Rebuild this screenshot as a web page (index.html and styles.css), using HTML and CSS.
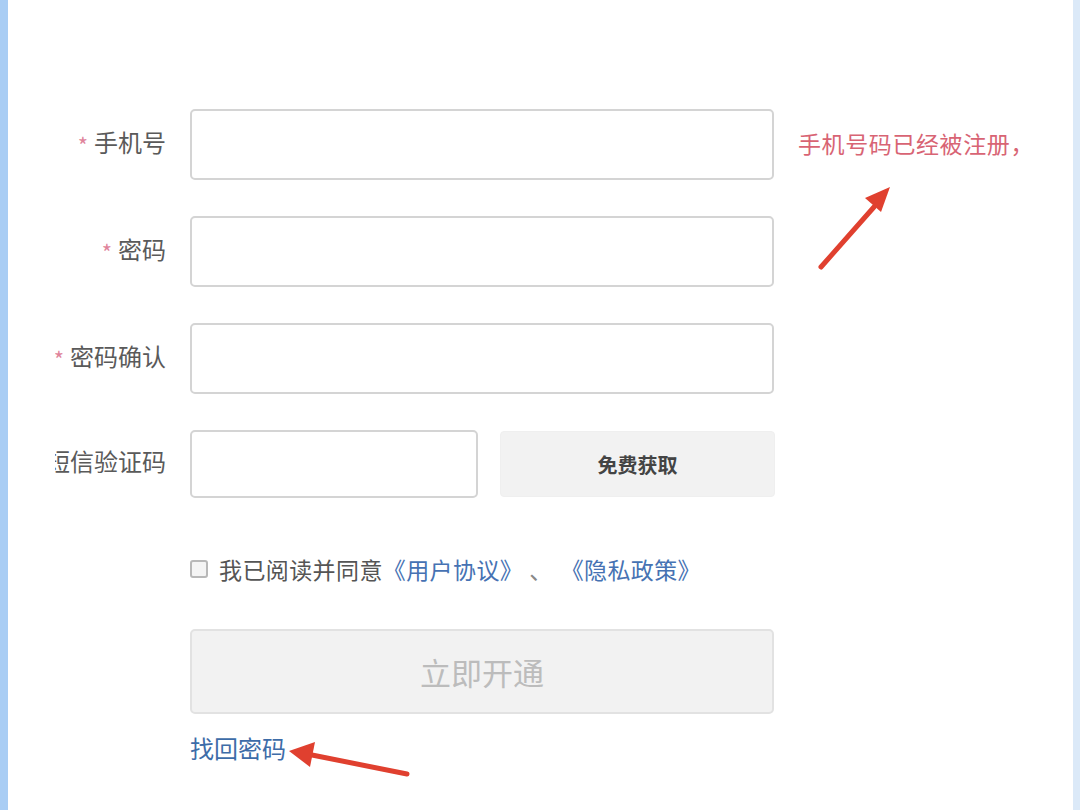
FILE: index.html
```html
<!DOCTYPE html>
<html lang="zh-CN">
<head>
  <meta charset="UTF-8" />
  <title>注册</title>
  <link rel="stylesheet" href="styles.css">
</head>
<body>
  <div class="page">
    <div class="edge-left"></div>

    <div class="main">
      <!-- 注册表单 -->
      <div class="form">
        <div class="row">
          <div class="label"><span class="star">*</span>手机号</div>
          <input class="field" type="text" />
          <div class="error">手机号码已经被注册，</div>
        </div>

        <div class="row">
          <div class="label"><span class="star">*</span>密码</div>
          <input class="field" type="password" />
        </div>

        <div class="row">
          <div class="label"><span class="star">*</span>密码确认</div>
          <input class="field" type="password" />
        </div>

        <div class="row row-sms">
          <div class="label">短信验证码</div>
          <input class="field field-sms" type="text" />
          <button class="btn-code">免费获取</button>
        </div>

        <div class="agree">
          <span class="check"></span>
          <span>我已阅读并同意</span>
          <a href="#">《用户协议》</a>
          <span class="sep">、</span>
          <a href="#">《隐私政策》</a>
        </div>

        <button class="btn-submit">立即开通</button>

        <a class="forgot" href="#">找回密码</a>
      </div>
    </div>

    <div class="edge-right"></div>

    <!-- 标注箭头 -->
    <svg class="marks" width="1080" height="810" viewBox="0 0 1080 810">
      <line x1="821" y1="267" x2="874" y2="207" stroke="#e0402f" stroke-width="5" stroke-linecap="round" />
      <polygon points="890,187 865,198 881,212" fill="#e0402f" />
      <line x1="407" y1="774" x2="312" y2="755" stroke="#e0402f" stroke-width="5" stroke-linecap="round" />
      <polygon points="289,751 315,742 310,767" fill="#e0402f" />
    </svg>
  </div>
</body>
</html>
```

FILE: styles.css
```css
body {
  margin: 0;
  font-family: "Noto Sans CJK SC", "Liberation Sans", sans-serif;
  background: #fff;
}

.page {
  position: relative;
  display: flex;
  width: 1080px;
  height: 810px;
  overflow: hidden;
}

.edge-left {
  width: 8px;
  background: #a9cdf4;
}

.edge-right {
  width: 7px;
  background: #dbe9f8;
}

.main {
  flex: 1;
  padding: 109px 0 0 47px;
}

.form {
  display: flex;
  flex-direction: column;
}

.row {
  display: flex;
  align-items: center;
  height: 71px;
  margin-bottom: 36px;
}

.label {
  width: 111px;
  margin-right: 24px;
  padding-bottom: 7px;
  display: flex;
  align-items: center;
  justify-content: flex-end;
  overflow: hidden;
  white-space: nowrap;
  font-size: 24px;
  color: #5a5a5a;
}

.star {
  color: #e0849b;
  font-size: 22px;
  margin-right: 6px;
  padding-top: 6px;
}

.field {
  box-sizing: border-box;
  width: 584px;
  height: 71px;
  border: 2px solid #d4d4d4;
  border-radius: 5px;
  background: #fff;
  outline: none;
}

.error {
  margin-left: 24px;
  padding-bottom: 4px;
  font-size: 23px;
  letter-spacing: 0.6px;
  color: #d86474;
  white-space: nowrap;
}

.row-sms {
  height: 68px;
  margin-bottom: 58px;
}

.row-sms .field-sms {
  width: 288px;
  height: 68px;
}

.btn-code {
  width: 275px;
  height: 66px;
  margin-left: 22px;
  border: 1px solid #efefef;
  border-radius: 4px;
  background: #f2f2f2;
  font-family: inherit;
  font-size: 20px;
  font-weight: bold;
  color: #444;
}

.agree {
  display: flex;
  align-items: center;
  margin-left: 135px;
  height: 26px;
  font-size: 23px;
  letter-spacing: 0.4px;
  color: #555;
}

.check {
  box-sizing: border-box;
  width: 18px;
  height: 18px;
  border: 2px solid #b8b8b8;
  border-radius: 3px;
  background: #f4f4f4;
  margin-right: 11px;
}

.agree a {
  color: #4672b3;
  text-decoration: none;
}

.agree .sep {
  color: #888;
  margin: 0 8px 0 6px;
}

.btn-submit {
  width: 584px;
  height: 85px;
  margin: 47px 0 0 135px;
  border: 2px solid #e2e2e2;
  border-radius: 5px;
  background: #f2f2f2;
  font-family: inherit;
  font-size: 31px;
  color: #bcbcbc;
}

.forgot {
  align-self: flex-start;
  margin: 16px 0 0 135px;
  font-size: 24px;
  color: #3d6ca8;
  text-decoration: none;
}

.marks {
  position: absolute;
  left: 0;
  top: 0;
  pointer-events: none;
}
```
